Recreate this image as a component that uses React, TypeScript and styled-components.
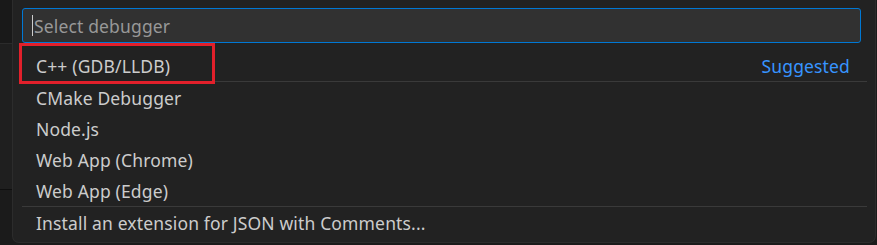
import React from 'react';
import styled, { createGlobalStyle } from 'styled-components';

const GlobalStyle = createGlobalStyle`
  html, body {
    margin: 0;
    padding: 0;
    background: #1f1f1f;
    font-family: "Noto Sans", "Open Sans", sans-serif;
  }
`;

const Screen = styled.div`
  display: flex;
  width: 877px;
  height: 245px;
  overflow: hidden;
  background: #1b1b1b;
`;

const EditorStrip = styled.div`
  display: flex;
  flex-direction: column;
  width: 12px;
  flex-shrink: 0;
`;

const StripPart = styled.div<{ $h: number; $bg: string; $line?: string }>`
  height: ${({ $h }) => $h}px;
  background: ${({ $bg }) => $bg};
  border-bottom: ${({ $line }) => ($line ? `1px solid ${$line}` : 'none')};
  flex-shrink: 0;
`;

const Panel = styled.div`
  display: flex;
  flex-direction: column;
  width: 864px;
  height: 243px;
  box-sizing: border-box;
  background: #222222;
  border: 1px solid #2c2c2c;
  border-top: none;
  border-radius: 0 0 7px 7px;
  padding: 8px 0 0 9px;
`;

const InputBox = styled.div`
  display: flex;
  align-items: center;
  width: 839px;
  height: 35px;
  box-sizing: border-box;
  background: #313131;
  border: 1px solid #0078d4;
  border-radius: 3px;
  padding-left: 9px;
  font-size: 17.5px;
  letter-spacing: 0.15px;
  color: #989898;
`;

const Caret = styled.span`
  width: 1px;
  height: 21px;
  background: #cccccc;
  margin-right: 1px;
`;

const List = styled.div`
  display: flex;
  flex-direction: column;
  width: 845px;
  margin-top: 7px;
`;

const Row = styled.div<{ $separator?: boolean }>`
  position: relative;
  display: flex;
  align-items: center;
  justify-content: space-between;
  height: 31px;
  padding: 0 17px 0 14px;
  font-size: 17.5px;
  letter-spacing: 0.15px;
  color: #cccccc;
  border-bottom: ${({ $separator }) => ($separator ? '1px solid #3a3a3a' : 'none')};
`;

const Label = styled.span`
  white-space: nowrap;
`;

const Suggested = styled.span`
  color: #3794ff;
  white-space: nowrap;
`;

const Highlight = styled.div`
  position: absolute;
  left: -3px;
  top: -7px;
  width: 196px;
  height: 41px;
  box-sizing: border-box;
  border: 3px solid #e2202b;
  pointer-events: none;
`;

const items = [
  { label: 'CMake Debugger' },
  { label: 'Node.js' },
  { label: 'Web App (Chrome)' },
  { label: 'Web App (Edge)', separator: true },
  { label: 'Install an extension for JSON with Comments...' },
];

export default function App() {
  return (
    <>
      <GlobalStyle />
      <Screen>
        <EditorStrip>
          <StripPart $h={43} $bg="#191919" $line="#2b2b2b" />
          <StripPart $h={145} $bg="#1f1f1f" $line="#0f0f0f" />
          <StripPart $h={60} $bg="#1b1b1b" />
        </EditorStrip>
        <Panel>
          <InputBox>
            <Caret />
            Select debugger
          </InputBox>
          <List>
            <Row $separator>
              <Label>C++ (GDB/LLDB)</Label>
              <Suggested>Suggested</Suggested>
              <Highlight />
            </Row>
            {items.map((it) => (
              <Row key={it.label} $separator={it.separator}>
                <Label>{it.label}</Label>
              </Row>
            ))}
          </List>
        </Panel>
      </Screen>
    </>
  );
}
